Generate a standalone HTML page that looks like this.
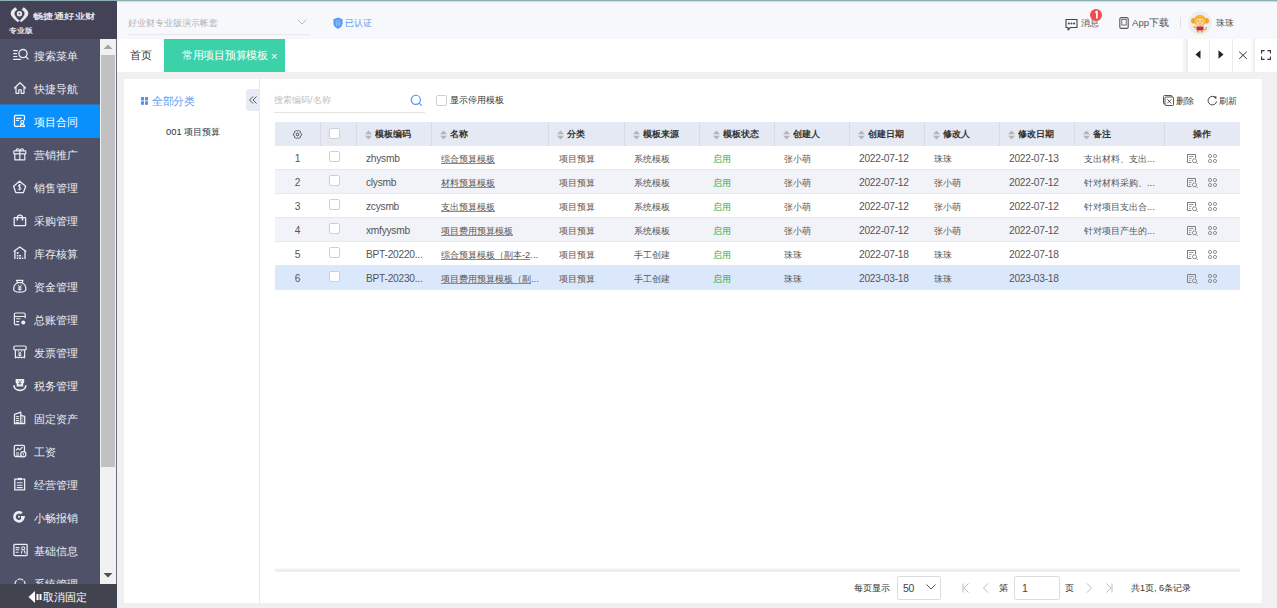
<!DOCTYPE html>
<html><head><meta charset="utf-8">
<style>
*{margin:0;padding:0;box-sizing:border-box}
html,body{width:1277px;height:608px;overflow:hidden;background:#f0f0f0;font-family:"Liberation Sans",sans-serif;color:#333}
.a{position:absolute}
#top{left:0;top:0;width:1277px;height:1px;background:#8cafb1}
#sb{left:0;top:1px;width:117px;height:607px;background:#4e5168}
#sbh{left:0;top:1px;width:117px;height:38px;background:#434257}
.mi{position:absolute;left:0;width:100px;height:33px;color:#eceef3;font-size:11px;line-height:33px;white-space:nowrap}
.mi .t{position:absolute;left:34px;top:1px}
.mi svg{position:absolute;left:13px;top:9px;width:14px;height:14px;overflow:visible}
.mi.on{background:#0990fc;color:#fff;box-shadow:0 -1px 0 rgba(9,144,252,0.55)}
#track{left:100px;top:39px;width:16px;height:545px;background:#f1f1f1}
#thumb{left:101px;top:55px;width:14px;height:412px;background:#c1c1c1}
#sbline{left:116px;top:39px;width:1px;height:569px;background:#6b6e82}
#sbb{left:0;top:584px;width:117px;height:24px;background:#41434f;color:#fff;font-size:11px;line-height:25px}
#hdr{left:117px;top:1px;width:1160px;height:38px;background:#f7f8fc}
#tabs{left:117px;top:39px;width:1160px;height:33px;background:#fff}
#panel{left:124px;top:79px;width:1138px;height:524px;background:#fff}
#lp{left:259px;top:79px;width:1px;height:524px;background:#e8e8e8}
.hd{position:absolute;white-space:nowrap}
.tb{position:absolute;top:39px;width:22px;height:33px;background:#fff}
#grid{position:absolute;left:275px;top:122px;width:965px}
#grid .r{position:absolute;left:0;width:965px;height:24px}
#grid .c{position:absolute;top:0;height:24px;line-height:24px;font-size:9.4px;color:#555;white-space:nowrap;overflow:hidden}
#grid .h .c{font-weight:bold;color:#333;font-size:9px}
#grid .h{background:#e4e9f4}
#grid .h .dv{position:absolute;top:0;width:1px;height:24px;background:#d8dbe3}
#grid .b{border-bottom:1px solid #e6e8ee}
#grid .s{background:#f2f3f8}
#grid .sel{background:#dbe8fb}
.cb{position:absolute;width:11px;height:11px;border:1px solid #cfcfcf;border-radius:2px;background:#fff}
.srt{position:absolute;top:7.5px;width:7px;height:10px}
.lk{text-decoration:underline;text-decoration-color:#8a8a8a;text-underline-offset:1px}
.gr{color:#1ab04f !important}

.ln{font-size:10.2px;letter-spacing:-0.25px;position:relative;top:0}

#grid .b .c{top:1px}
</style></head><body>
<div id="top" class="a"></div>
<div id="sb" class="a"></div>
<div id="sbh" class="a"></div>
<svg class="a" style="left:0;top:0" width="40" height="30">
<path d="M15.3 7.6Q10.4 10.8 10.9 14Q11.5 17.2 17.9 21.9L19 20.6Q14.4 16.6 14.1 13.8Q14 11.6 16.9 9.5Z" fill="#ececf0" stroke="#ececf0" stroke-width="0.6" stroke-linejoin="round"/>
<path d="M23.7 7.6Q28.6 10.8 28.1 14Q27.5 17.2 21.1 21.9L20 20.6Q24.6 16.6 24.9 13.8Q25 11.6 22.1 9.5Z" fill="#ececf0" stroke="#ececf0" stroke-width="0.6" stroke-linejoin="round"/>
<circle cx="19.5" cy="13.7" r="2.7" fill="#ececf0"/><circle cx="19.5" cy="13.7" r="0.9" fill="#6a6a7a"/>
</svg>
<div class="a" style="left:33px;top:12px;font-size:10px;line-height:10px;font-weight:bold;color:#e4e4ea;letter-spacing:0.4px;transform:scaleY(0.78);transform-origin:0 50%">畅捷通好业财</div>
<div class="a" style="left:9px;top:25.5px;font-size:8px;line-height:10px;font-weight:bold;color:#e6ebf5;transform:scaleY(0.9);transform-origin:0 50%">专业版</div>
<div class="mi" style="top:39px"><svg viewBox="0 0 14 14"><path d="M0.6 2.6h3.8M0.6 5.6h3M0.6 8.5h3.3M0.6 11.3h7" fill="none" stroke="currentColor" stroke-width="1.2" stroke-linecap="round"/><circle cx="10" cy="5.6" r="4.1" fill="none" stroke="currentColor" stroke-width="1.3"/><path d="M12.9 8.6l2.2 2.5" stroke="currentColor" stroke-width="1.3" stroke-linecap="round"/></svg><span class="t">搜索菜单</span></div>
<div class="mi" style="top:72px"><svg viewBox="0 0 14 14"><path d="M1.5 7L7 1.8 12.5 7M3 5.8V12.3h2.8V8.8h2.4v3.5H11V5.8" fill="none" stroke="currentColor" stroke-width="1.2" stroke-linejoin="round" stroke-linecap="round"/></svg><span class="t">快捷导航</span></div>
<div class="mi on" style="top:105px"><svg viewBox="0 0 14 14"><path d="M6.3 12.4H2.7A1.2 1.2 0 0 1 1.5 11.2V2.6A1.2 1.2 0 0 1 2.7 1.4h7.6A1.2 1.2 0 0 1 11.5 2.6V6.3" fill="none" stroke="currentColor" stroke-width="1.2"/><path d="M3.6 4.4h4.4M3.6 6.4h2" stroke="currentColor" stroke-width="1.1" stroke-linecap="round"/><circle cx="9.3" cy="8" r="1.5" fill="none" stroke="currentColor" stroke-width="1.1"/><path d="M7.1 12.5c0-1.6 1-2.4 2.2-2.4s2.2 0.8 2.2 2.4z" fill="none" stroke="currentColor" stroke-width="1.1" stroke-linejoin="round"/></svg><span class="t">项目合同</span></div>
<div class="mi" style="top:138px"><svg viewBox="0 0 14 14"><rect x="0.8" y="3.9" width="12" height="3" rx="0.6" fill="none" stroke="currentColor" stroke-width="1.2"/><path d="M1.8 6.9v5.9h10V6.9M6.8 3.9v8.9M6.8 3.7C5.6 1.2 3 1 3.3 3.7M6.8 3.7C8 1.2 10.6 1 10.3 3.7" fill="none" stroke="currentColor" stroke-width="1.2" stroke-linejoin="round"/></svg><span class="t">营销推广</span></div>
<div class="mi" style="top:171px"><svg viewBox="0 0 14 14"><path d="M6.6 1.2L12.7 6.2 10.4 12.6H2.8L0.6 6.2Z" fill="none" stroke="currentColor" stroke-width="1.3" stroke-linejoin="round"/><path d="M8.1 5.4C7.6 4.6 5.3 4.6 5.3 6 5.3 7.3 8 7 8 8.4 8 9.8 5.6 9.8 5.1 9M6.6 4v6.4" fill="none" stroke="currentColor" stroke-width="1"/></svg><span class="t">销售管理</span></div>
<div class="mi" style="top:204px"><svg viewBox="0 0 14 14"><rect x="1.2" y="4.7" width="11.4" height="8" rx="0.5" fill="none" stroke="currentColor" stroke-width="1.3"/><path d="M4.2 4.6C4.6 1.4 9.2 1.4 9.6 4.6" fill="none" stroke="currentColor" stroke-width="1.2"/><path d="M4.3 4.8v2.6M9.5 4.8v2.6" stroke="currentColor" stroke-width="1.6"/></svg><span class="t">采购管理</span></div>
<div class="mi" style="top:237px"><svg viewBox="0 0 14 14"><path d="M0.6 5.6L6.8 1 13.2 5.6M1.9 5v8M12 5v8" fill="none" stroke="currentColor" stroke-width="1.3" stroke-linejoin="round"/><path d="M3.8 6h1.6v2H3.8zM3.8 9h1.6v1.6H3.8zM6.1 9h2v1.6h-2zM3.8 11.4h1.6v1.6H3.8zM6.1 11.4h2v1.6h-2zM9 11.4h1.3v1.6H9z" fill="currentColor"/></svg><span class="t">库存核算</span></div>
<div class="mi" style="top:270px"><svg viewBox="0 0 14 14"><path d="M3.6 1.3h6.4L9.1 3.7H4.5z" fill="none" stroke="currentColor" stroke-width="1.2" stroke-linejoin="round"/><path d="M4.5 3.8C1.6 5.2 0.7 8 0.7 10 0.7 12.4 2.6 13.2 6.8 13.2S12.9 12.4 12.9 10C12.9 8 12 5.2 9.1 3.8" fill="none" stroke="currentColor" stroke-width="1.2"/><path d="M4.9 5.9L6.8 8.2 8.7 5.9M6.8 8.2v3.6M5 8.9h3.6M5 10.4h3.6" fill="none" stroke="currentColor" stroke-width="1"/></svg><span class="t">资金管理</span></div>
<div class="mi" style="top:303px"><svg viewBox="0 0 14 14"><path d="M6.3 12.6H2.7A1.3 1.3 0 0 1 1.4 11.3V2.3A1.3 1.3 0 0 1 2.7 1h8.2A1.3 1.3 0 0 1 12.2 2.3V6.3M1.4 4.5h10.8" fill="none" stroke="currentColor" stroke-width="1.2"/><path d="M3.6 6.8h3.4M3.6 9.6h2.2" stroke="currentColor" stroke-width="1.1" stroke-linecap="round"/><circle cx="10.3" cy="10.6" r="2" fill="currentColor"/></svg><span class="t">总账管理</span></div>
<div class="mi" style="top:336px"><svg viewBox="0 0 14 14"><rect x="0.8" y="1" width="12.4" height="3.9" rx="1.4" fill="none" stroke="currentColor" stroke-width="1.2"/><path d="M2.4 4.9v7.9l1.6-0.8 1.5 0.8 1.5-0.8 1.5 0.8 1.5-0.8 1.6 0.8V4.9" fill="none" stroke="currentColor" stroke-width="1.2" stroke-linejoin="round"/><path d="M5 6.2l1.8 2.1 1.8-2.1M6.8 8.3v3.1M5.2 8.9h3.2M5.2 10.3h3.2" fill="none" stroke="currentColor" stroke-width="0.9"/></svg><span class="t">发票管理</span></div>
<div class="mi" style="top:369px"><svg viewBox="0 0 14 14"><path d="M1 7.2c0 3 2.6 5.2 5.9 5.2s5.9-2.2 5.9-5.2" fill="none" stroke="currentColor" stroke-width="1.7"/><path d="M2.6 1h8.6v3.6l-1 1.2v2.6H3.6V5.8l-1-1.2z" fill="currentColor"/><path d="M5 2.5l1.8 1.6 1.8-1.6M6.8 4.1v3M5.3 5.5h3" stroke="#4e5168" stroke-width="0.7" fill="none"/></svg><span class="t">税务管理</span></div>
<div class="mi" style="top:402px"><svg viewBox="0 0 14 14"><path d="M1.5 12.5V3.3L7.8 1.2V12.5M7.8 4.4L11.7 5.4V12.5H0.8" fill="none" stroke="currentColor" stroke-width="1.3" stroke-linejoin="round"/><path d="M3 5.6h3.2M3 7.6h3.2M3 9.6h3.2M3 11.4h3.2M9.3 7h1M9.3 9h1M9.3 11h1" stroke="currentColor" stroke-width="1"/></svg><span class="t">固定资产</span></div>
<div class="mi" style="top:435px"><svg viewBox="0 0 14 14"><rect x="1.3" y="1.3" width="10.2" height="11.2" rx="1.5" fill="none" stroke="currentColor" stroke-width="1.3"/><path d="M3 6.3l2-2 1.8 1.5 2.7-2.8M3 9h3M3 11h3" fill="none" stroke="currentColor" stroke-width="1.1"/><circle cx="10.3" cy="10.3" r="2.6" fill="#4e5168" stroke="currentColor" stroke-width="1.2"/><path d="M10.3 9.2v2.2" stroke="currentColor" stroke-width="1"/></svg><span class="t">工资</span></div>
<div class="mi" style="top:468px"><svg viewBox="0 0 14 14"><path d="M4 2.2H1.8v10.6h9.8V2.2H9.4" fill="none" stroke="currentColor" stroke-width="1.3"/><path d="M4.3 0.9h4.8v2.2H4.3z" fill="currentColor"/><path d="M3.8 5.8h5.8M3.8 8.2h5.8M3.8 10.6h5.8" stroke="currentColor" stroke-width="1.1"/></svg><span class="t">经营管理</span></div>
<div class="mi" style="top:501px"><svg viewBox="0 0 14 14"><path d="M8.8 3.3A4.5 4.5 0 1 0 10.4 7.4H8" fill="none" stroke="currentColor" stroke-width="2.7"/><path d="M6 5.5L7.3 6.8 6 8.1 4.7 6.8z" fill="currentColor"/></svg><span class="t">小畅报销</span></div>
<div class="mi" style="top:534px"><svg viewBox="0 0 14 14"><rect x="0.9" y="1.4" width="13.2" height="11.2" rx="0.8" fill="none" stroke="currentColor" stroke-width="1.3"/><path d="M2.6 4.6h3.8M2.6 6.8h3.8M2.6 9.3h3" stroke="currentColor" stroke-width="1.1"/><circle cx="10.2" cy="5.3" r="1.5" fill="none" stroke="currentColor" stroke-width="1.1"/><path d="M8.2 10.5l1-3.2M12.2 10.5l-1-3.2" stroke="currentColor" stroke-width="1.1"/></svg><span class="t">基础信息</span></div>
<div class="mi" style="top:567px"><svg viewBox="0 0 14 14"><circle cx="7" cy="8" r="5" fill="none" stroke="currentColor" stroke-width="1.2" stroke-linejoin="round" stroke-linecap="round" stroke-dasharray="5 2"/></svg><span class="t">系统管理</span></div>
<div id="track" class="a"></div>
<div id="thumb" class="a"></div>
<svg class="a" style="left:103px;top:44px" width="10" height="6"><path d="M5 0.5L9.5 5H0.5z" fill="#a3a3a3"/></svg>
<svg class="a" style="left:103px;top:572px" width="10" height="6"><path d="M5 5.5L9.5 1H0.5z" fill="#505050"/></svg>
<div id="sbline" class="a"></div>
<div id="sbb" class="a"></div>
<svg class="a" style="left:28px;top:590px" width="15" height="14"><path d="M0.5 7L7 1v12z" fill="#fff"/><rect x="8.5" y="4" width="2" height="6" fill="#fff"/><rect x="11.5" y="4" width="2" height="6" fill="#fff"/></svg>
<div class="a" style="left:43px;top:589px;font-size:11px;line-height:17px;color:#fff">取消固定</div>
<div id="hdr" class="a"></div>
<div class="a" style="left:117px;top:1px;width:1160px;height:1px;background:#d5dfe2"></div>
<div class="a" style="left:117px;top:2px;width:1160px;height:1px;background:#eff2f6"></div>
<div id="tabs" class="a"></div>
<div id="panel" class="a"></div>
<div id="lp" class="a"></div>
<div class="hd" style="left:128px;top:17px;font-size:9px;line-height:13px;color:#b3b3b3">好业财专业版演示帐套</div>
<div class="a" style="left:128px;top:34px;width:182px;height:1px;background:#e6e8ee"></div>
<svg class="a" style="left:297px;top:19px" width="10" height="6"><path d="M0.5 0.5L5 5 9.5 0.5" fill="none" stroke="#b8b8b8" stroke-width="1"/></svg>
<svg class="a" style="left:333px;top:16.5px" width="10" height="12" viewBox="0 0 10 12"><path d="M5 0.6L9.6 2.3v4c0 2.9-2.2 4.7-4.6 5.4C2.6 11 0.4 9.2 0.4 6.3V2.3z" fill="#5a9cf6"/><path d="M2.6 5L5 3.2 7.4 5M3.6 5v3.8M6.4 5v3.8M5 5.2v3.6" stroke="#a9ccfa" stroke-width="0.7" fill="none"/></svg>
<div class="hd" style="left:345px;top:17px;font-size:9px;line-height:13px;color:#5096f4">已认证</div>
<svg class="a" style="left:1065px;top:18px" width="13" height="13" viewBox="0 0 13 13"><path d="M1 1.5h11v8H5.5L3 12V9.5H1z" fill="none" stroke="#444" stroke-width="1.1" stroke-linejoin="round"/><circle cx="3.9" cy="5.5" r="1" fill="#444"/><circle cx="6.5" cy="5.5" r="1" fill="#444"/><circle cx="9.1" cy="5.5" r="1" fill="#444"/></svg>
<div class="hd" style="left:1081px;top:17px;font-size:9px;line-height:13px;color:#555">消息</div>
<svg class="a" style="left:1089px;top:8px" width="14" height="14" viewBox="0 0 14 14"><circle cx="7" cy="7" r="6" fill="#f14c4c"/><path d="M6.2 4.6L7.9 3.4V10.6" fill="none" stroke="#fff" stroke-width="1.7" stroke-linejoin="round"/></svg>
<svg class="a" style="left:1119px;top:17px" width="10" height="12" viewBox="0 0 10 12"><rect x="0.8" y="0.6" width="8.4" height="10.8" rx="1.5" fill="none" stroke="#555" stroke-width="1.1"/><rect x="2.8" y="2.5" width="4.4" height="5.5" fill="none" stroke="#555" stroke-width="0.8"/></svg>
<div class="hd" style="left:1132px;top:16px;font-size:9.6px;line-height:13px;color:#555">App下载</div>
<div class="a" style="left:1180px;top:17px;width:1px;height:11px;background:#e0e0e0"></div>
<svg class="a" style="left:1188px;top:11px" width="24" height="24" viewBox="0 0 24 24"><circle cx="12" cy="12" r="11.8" fill="#ededf0"/>
<circle cx="5.8" cy="9.8" r="2.8" fill="#f0a030"/><circle cx="18.2" cy="9.8" r="2.8" fill="#f0a030"/>
<ellipse cx="12" cy="9.5" rx="6" ry="5.8" fill="#f5b23c"/><ellipse cx="12" cy="11" rx="4" ry="3.4" fill="#fcd58a"/>
<circle cx="10.3" cy="10" r="0.6" fill="#7a5a60"/><circle cx="13.7" cy="10" r="0.6" fill="#7a5a60"/><path d="M11 12.5q1 0.8 2 0" stroke="#c07030" stroke-width="0.5" fill="none"/>
<path d="M8.5 15.5h7v4h-7z" fill="#c8283a"/><circle cx="6.8" cy="16.3" r="1.2" fill="#f5b23c"/><path d="M9 19.5h2.2v2h-2.2zM12.8 19.5h2.2v2h-2.2z" fill="#f0a030"/><path d="M15.5 19c2 0 3-1 2.8-3" stroke="#f0a030" stroke-width="1.2" fill="none"/></svg>
<div class="hd" style="left:1216px;top:17px;font-size:9px;line-height:13px;color:#555">珠珠</div>
<div class="hd" style="left:130px;top:48px;font-size:11px;line-height:15px;color:#333">首页</div>
<div class="a" style="left:164px;top:39px;width:121px;height:33px;background:#3bd2aa"></div>
<div class="hd" style="left:182px;top:48px;font-size:11px;line-height:15px;color:#fff;letter-spacing:-0.3px">常用项目预算模板</div>
<div class="hd" style="left:271px;top:49px;font-size:11px;line-height:15px;color:#fff">×</div>
<div class="a" style="left:1181px;top:39px;width:6px;height:33px;background:linear-gradient(to right,rgba(0,0,0,0),rgba(0,0,0,0.07))"></div>
<div class="tb" style="left:1187px;width:22px;border-left:1px solid #ebebeb"></div>
<div class="tb" style="left:1209px;width:23px;border-left:1px solid #ebebeb"></div>
<div class="tb" style="left:1232px;width:22px;border-left:1px solid #ebebeb"></div>
<div class="tb" style="left:1254px;width:23px;border-left:1px solid #ebebeb"></div>
<div class="a" style="left:1250px;top:39px;width:4px;height:33px;background:linear-gradient(to right,rgba(0,0,0,0),rgba(0,0,0,0.05))"></div>
<svg class="a" style="left:1195px;top:50px" width="6" height="9"><path d="M5.5 0.3v8.4L0.5 4.5z" fill="#222"/></svg>
<svg class="a" style="left:1218px;top:50px" width="6" height="9"><path d="M0.5 0.3v8.4L5.5 4.5z" fill="#222"/></svg>
<svg class="a" style="left:1238px;top:50px" width="10" height="10"><path d="M1.2 1.7l7.6 7.2M8.8 1.7L1.2 8.9" stroke="#333" stroke-width="1"/></svg>
<svg class="a" style="left:1261px;top:50px" width="10" height="10"><path d="M0.6 3.6V0.6H3.6M6.4 0.6h3V3.6M9.4 6.4v3H6.4M3.6 9.4H0.6V6.4" fill="none" stroke="#333" stroke-width="1.1"/></svg>
<svg class="a" style="left:141px;top:97px" width="8" height="9"><rect x="0" y="0" width="3" height="3.5" fill="#4f92f3"/><rect x="4" y="0" width="3" height="3.5" fill="#4f92f3"/><rect x="0" y="4.3" width="3" height="3.5" fill="#4f92f3"/><rect x="4" y="4.3" width="3" height="3.5" fill="#4f92f3"/></svg>
<div class="hd" style="left:152px;top:94px;font-size:10.5px;line-height:15px;color:#5a9cf5;letter-spacing:-0.4px">全部分类</div>
<div class="hd" style="left:166px;top:125px;font-size:9.4px;line-height:13px;color:#333">001 项目预算</div>
<div class="a" style="left:246px;top:89px;width:13px;height:22px;background:#e6ebf5;border-radius:3px 0 0 3px"></div>
<svg class="a" style="left:248px;top:95px" width="10" height="10"><path d="M5 1.5L1.5 5 5 8.5M8.5 1.5L5 5 8.5 8.5" fill="none" stroke="#555" stroke-width="1"/></svg>
<div class="hd" style="left:274px;top:94px;font-size:9px;line-height:13px;color:#bfbfbf">搜索编码/名称</div>
<div class="a" style="left:274px;top:112px;width:151px;height:1px;background:#e3e3e3"></div>
<svg class="a" style="left:410px;top:94px" width="13" height="13"><circle cx="5.8" cy="5.8" r="4.6" fill="none" stroke="#4a8ff0" stroke-width="1.1"/><path d="M9.2 9.2l2.5 2.5" stroke="#4a8ff0" stroke-width="1.1"/></svg>
<div class="cb" style="left:436px;top:95px"></div>
<div class="hd" style="left:450px;top:94px;font-size:9px;line-height:13px;color:#333">显示停用模板</div>
<svg class="a" style="left:1163px;top:95px" width="11" height="11"><rect x="0.5" y="0.5" width="8.5" height="8.5" rx="1" fill="none" stroke="#444" stroke-width="0.9"/><rect x="2" y="2" width="8.5" height="8.5" rx="1" fill="#fff" stroke="#444" stroke-width="0.9"/><path d="M4.3 4.3l4 4M8.3 4.3l-4 4" stroke="#444" stroke-width="0.9"/></svg>
<div class="hd" style="left:1176px;top:95px;font-size:9px;line-height:13px;color:#444">删除</div>
<svg class="a" style="left:1207px;top:95px" width="11" height="11"><path d="M8.8 3A4.3 4.3 0 1 0 9.6 6.5" fill="none" stroke="#444" stroke-width="1"/><path d="M6.5 1.8L9.5 1.2 9.3 4.3z" fill="#444"/></svg>
<div class="hd" style="left:1219px;top:95px;font-size:9px;line-height:13px;color:#444">刷新</div>
<div id="grid">
<div class="r h" style="top:0"><svg class="a" style="left:17px;top:7px" width="11" height="11" viewBox="0 0 11 11"><path d="M5.50 2.20A1.7 1.7 0 0 1 8.36 3.85A1.7 1.7 0 0 1 8.36 7.15A1.7 1.7 0 0 1 5.50 8.80A1.7 1.7 0 0 1 2.64 7.15A1.7 1.7 0 0 1 2.64 3.85A1.7 1.7 0 0 1 5.50 2.20z" fill="none" stroke="#444" stroke-width="0.9"/><circle cx="5.5" cy="5.5" r="1.3" fill="none" stroke="#444" stroke-width="1"/></svg><div class="dv" style="left:45px"></div><div class="cb" style="left:54px;top:6px"></div><div class="dv" style="left:81px"></div><svg class="srt" style="left:90px" width="7" height="10" viewBox="0 0 7 10"><path d="M3.5 0.5L7 4.2H0z" fill="#b4b4b4"/><path d="M3.5 9.5L7 5.8H0z" fill="#b4b4b4"/></svg><div class="c" style="left:100px;width:56px">模板编码</div><div class="dv" style="left:156px"></div><svg class="srt" style="left:165px" width="7" height="10" viewBox="0 0 7 10"><path d="M3.5 0.5L7 4.2H0z" fill="#b4b4b4"/><path d="M3.5 9.5L7 5.8H0z" fill="#b4b4b4"/></svg><div class="c" style="left:175px;width:98px">名称</div><div class="dv" style="left:273px"></div><svg class="srt" style="left:282px" width="7" height="10" viewBox="0 0 7 10"><path d="M3.5 0.5L7 4.2H0z" fill="#b4b4b4"/><path d="M3.5 9.5L7 5.8H0z" fill="#b4b4b4"/></svg><div class="c" style="left:292px;width:57px">分类</div><div class="dv" style="left:349px"></div><svg class="srt" style="left:358px" width="7" height="10" viewBox="0 0 7 10"><path d="M3.5 0.5L7 4.2H0z" fill="#b4b4b4"/><path d="M3.5 9.5L7 5.8H0z" fill="#b4b4b4"/></svg><div class="c" style="left:368px;width:56px">模板来源</div><div class="dv" style="left:424px"></div><svg class="srt" style="left:438px" width="7" height="10" viewBox="0 0 7 10"><path d="M3.5 0.5L7 4.2H0z" fill="#b4b4b4"/><path d="M3.5 9.5L7 5.8H0z" fill="#b4b4b4"/></svg><div class="c" style="left:448px;width:51px">模板状态</div><div class="dv" style="left:499px"></div><svg class="srt" style="left:508px" width="7" height="10" viewBox="0 0 7 10"><path d="M3.5 0.5L7 4.2H0z" fill="#b4b4b4"/><path d="M3.5 9.5L7 5.8H0z" fill="#b4b4b4"/></svg><div class="c" style="left:518px;width:56px">创建人</div><div class="dv" style="left:574px"></div><svg class="srt" style="left:583px" width="7" height="10" viewBox="0 0 7 10"><path d="M3.5 0.5L7 4.2H0z" fill="#b4b4b4"/><path d="M3.5 9.5L7 5.8H0z" fill="#b4b4b4"/></svg><div class="c" style="left:593px;width:56px">创建日期</div><div class="dv" style="left:649px"></div><svg class="srt" style="left:658px" width="7" height="10" viewBox="0 0 7 10"><path d="M3.5 0.5L7 4.2H0z" fill="#b4b4b4"/><path d="M3.5 9.5L7 5.8H0z" fill="#b4b4b4"/></svg><div class="c" style="left:668px;width:56px">修改人</div><div class="dv" style="left:724px"></div><svg class="srt" style="left:733px" width="7" height="10" viewBox="0 0 7 10"><path d="M3.5 0.5L7 4.2H0z" fill="#b4b4b4"/><path d="M3.5 9.5L7 5.8H0z" fill="#b4b4b4"/></svg><div class="c" style="left:743px;width:56px">修改日期</div><div class="dv" style="left:799px"></div><svg class="srt" style="left:808px" width="7" height="10" viewBox="0 0 7 10"><path d="M3.5 0.5L7 4.2H0z" fill="#b4b4b4"/><path d="M3.5 9.5L7 5.8H0z" fill="#b4b4b4"/></svg><div class="c" style="left:818px;width:71px">备注</div><div class="dv" style="left:889px"></div><div class="c" style="left:889px;width:76px;text-align:center">操作</div></div>
<div class="r b" style="top:24px"><div class="c" style="left:0px;width:45px;text-align:center"><span class="ln">1</span></div><div class="cb" style="left:54px;top:5px"></div><div class="c" style="left:91px;width:65px"><span class="ln">zhysmb</span></div><div class="c" style="left:166px;width:107px"><span class="lk">综合预算模板</span></div><div class="c" style="left:284px;width:65px">项目预算</div><div class="c" style="left:359px;width:65px">系统模板</div><div class="c gr" style="left:438px;width:61px">启用</div><div class="c" style="left:509px;width:65px">张小萌</div><div class="c" style="left:584px;width:65px"><span class="ln">2022-07-12</span></div><div class="c" style="left:659px;width:65px">珠珠</div><div class="c" style="left:734px;width:65px"><span class="ln">2022-07-13</span></div><div class="c" style="left:809px;width:80px">支出材料、支出...</div><svg class="a" style="left:912px;top:8px" width="12" height="11" viewBox="0 0 12 11"><path d="M8.5 4V0.5H0.5v8h4" fill="none" stroke="#808080" stroke-width="1"/><path d="M2 2.5h4.5M2 4.5h2.5M2 6.5h1.5" stroke="#9a9a9a" stroke-width="1"/><circle cx="7.5" cy="6.8" r="2" fill="none" stroke="#808080" stroke-width="0.9"/><path d="M9 8.3l1.6 1.6" stroke="#808080" stroke-width="1"/></svg><svg class="a" style="left:933px;top:8px" width="11" height="11" viewBox="0 0 11 11"><rect x="0.5" y="0.5" width="3" height="3" rx="1.3" fill="none" stroke="#777" stroke-width="0.9"/><rect x="5.5" y="0.5" width="3" height="3" rx="1.3" fill="none" stroke="#777" stroke-width="0.9"/><rect x="0.5" y="5.5" width="3" height="3" rx="1.3" fill="none" stroke="#777" stroke-width="0.9"/><rect x="5.5" y="5.5" width="3" height="3" rx="1.3" fill="none" stroke="#777" stroke-width="0.9"/></svg></div>
<div class="r b s" style="top:48px"><div class="c" style="left:0px;width:45px;text-align:center"><span class="ln">2</span></div><div class="cb" style="left:54px;top:5px"></div><div class="c" style="left:91px;width:65px"><span class="ln">clysmb</span></div><div class="c" style="left:166px;width:107px"><span class="lk">材料预算模板</span></div><div class="c" style="left:284px;width:65px">项目预算</div><div class="c" style="left:359px;width:65px">系统模板</div><div class="c gr" style="left:438px;width:61px">启用</div><div class="c" style="left:509px;width:65px">张小萌</div><div class="c" style="left:584px;width:65px"><span class="ln">2022-07-12</span></div><div class="c" style="left:659px;width:65px">张小萌</div><div class="c" style="left:734px;width:65px"><span class="ln">2022-07-12</span></div><div class="c" style="left:809px;width:80px">针对材料采购、...</div><svg class="a" style="left:912px;top:8px" width="12" height="11" viewBox="0 0 12 11"><path d="M8.5 4V0.5H0.5v8h4" fill="none" stroke="#808080" stroke-width="1"/><path d="M2 2.5h4.5M2 4.5h2.5M2 6.5h1.5" stroke="#9a9a9a" stroke-width="1"/><circle cx="7.5" cy="6.8" r="2" fill="none" stroke="#808080" stroke-width="0.9"/><path d="M9 8.3l1.6 1.6" stroke="#808080" stroke-width="1"/></svg><svg class="a" style="left:933px;top:8px" width="11" height="11" viewBox="0 0 11 11"><rect x="0.5" y="0.5" width="3" height="3" rx="1.3" fill="none" stroke="#777" stroke-width="0.9"/><rect x="5.5" y="0.5" width="3" height="3" rx="1.3" fill="none" stroke="#777" stroke-width="0.9"/><rect x="0.5" y="5.5" width="3" height="3" rx="1.3" fill="none" stroke="#777" stroke-width="0.9"/><rect x="5.5" y="5.5" width="3" height="3" rx="1.3" fill="none" stroke="#777" stroke-width="0.9"/></svg></div>
<div class="r b" style="top:72px"><div class="c" style="left:0px;width:45px;text-align:center"><span class="ln">3</span></div><div class="cb" style="left:54px;top:5px"></div><div class="c" style="left:91px;width:65px"><span class="ln">zcysmb</span></div><div class="c" style="left:166px;width:107px"><span class="lk">支出预算模板</span></div><div class="c" style="left:284px;width:65px">项目预算</div><div class="c" style="left:359px;width:65px">系统模板</div><div class="c gr" style="left:438px;width:61px">启用</div><div class="c" style="left:509px;width:65px">张小萌</div><div class="c" style="left:584px;width:65px"><span class="ln">2022-07-12</span></div><div class="c" style="left:659px;width:65px">张小萌</div><div class="c" style="left:734px;width:65px"><span class="ln">2022-07-12</span></div><div class="c" style="left:809px;width:80px">针对项目支出合...</div><svg class="a" style="left:912px;top:8px" width="12" height="11" viewBox="0 0 12 11"><path d="M8.5 4V0.5H0.5v8h4" fill="none" stroke="#808080" stroke-width="1"/><path d="M2 2.5h4.5M2 4.5h2.5M2 6.5h1.5" stroke="#9a9a9a" stroke-width="1"/><circle cx="7.5" cy="6.8" r="2" fill="none" stroke="#808080" stroke-width="0.9"/><path d="M9 8.3l1.6 1.6" stroke="#808080" stroke-width="1"/></svg><svg class="a" style="left:933px;top:8px" width="11" height="11" viewBox="0 0 11 11"><rect x="0.5" y="0.5" width="3" height="3" rx="1.3" fill="none" stroke="#777" stroke-width="0.9"/><rect x="5.5" y="0.5" width="3" height="3" rx="1.3" fill="none" stroke="#777" stroke-width="0.9"/><rect x="0.5" y="5.5" width="3" height="3" rx="1.3" fill="none" stroke="#777" stroke-width="0.9"/><rect x="5.5" y="5.5" width="3" height="3" rx="1.3" fill="none" stroke="#777" stroke-width="0.9"/></svg></div>
<div class="r b s" style="top:96px"><div class="c" style="left:0px;width:45px;text-align:center"><span class="ln">4</span></div><div class="cb" style="left:54px;top:5px"></div><div class="c" style="left:91px;width:65px"><span class="ln">xmfyysmb</span></div><div class="c" style="left:166px;width:107px"><span class="lk">项目费用预算模板</span></div><div class="c" style="left:284px;width:65px">项目预算</div><div class="c" style="left:359px;width:65px">系统模板</div><div class="c gr" style="left:438px;width:61px">启用</div><div class="c" style="left:509px;width:65px">张小萌</div><div class="c" style="left:584px;width:65px"><span class="ln">2022-07-12</span></div><div class="c" style="left:659px;width:65px">张小萌</div><div class="c" style="left:734px;width:65px"><span class="ln">2022-07-12</span></div><div class="c" style="left:809px;width:80px">针对项目产生的...</div><svg class="a" style="left:912px;top:8px" width="12" height="11" viewBox="0 0 12 11"><path d="M8.5 4V0.5H0.5v8h4" fill="none" stroke="#808080" stroke-width="1"/><path d="M2 2.5h4.5M2 4.5h2.5M2 6.5h1.5" stroke="#9a9a9a" stroke-width="1"/><circle cx="7.5" cy="6.8" r="2" fill="none" stroke="#808080" stroke-width="0.9"/><path d="M9 8.3l1.6 1.6" stroke="#808080" stroke-width="1"/></svg><svg class="a" style="left:933px;top:8px" width="11" height="11" viewBox="0 0 11 11"><rect x="0.5" y="0.5" width="3" height="3" rx="1.3" fill="none" stroke="#777" stroke-width="0.9"/><rect x="5.5" y="0.5" width="3" height="3" rx="1.3" fill="none" stroke="#777" stroke-width="0.9"/><rect x="0.5" y="5.5" width="3" height="3" rx="1.3" fill="none" stroke="#777" stroke-width="0.9"/><rect x="5.5" y="5.5" width="3" height="3" rx="1.3" fill="none" stroke="#777" stroke-width="0.9"/></svg></div>
<div class="r b" style="top:120px"><div class="c" style="left:0px;width:45px;text-align:center"><span class="ln">5</span></div><div class="cb" style="left:54px;top:5px"></div><div class="c" style="left:91px;width:65px"><span class="ln">BPT-20220...</span></div><div class="c" style="left:166px;width:107px"><span class="lk">综合预算模板（副本-2</span>...</div><div class="c" style="left:284px;width:65px">项目预算</div><div class="c" style="left:359px;width:65px">手工创建</div><div class="c gr" style="left:438px;width:61px">启用</div><div class="c" style="left:509px;width:65px">珠珠</div><div class="c" style="left:584px;width:65px"><span class="ln">2022-07-18</span></div><div class="c" style="left:659px;width:65px">珠珠</div><div class="c" style="left:734px;width:65px"><span class="ln">2022-07-18</span></div><div class="c" style="left:809px;width:80px"></div><svg class="a" style="left:912px;top:8px" width="12" height="11" viewBox="0 0 12 11"><path d="M8.5 4V0.5H0.5v8h4" fill="none" stroke="#808080" stroke-width="1"/><path d="M2 2.5h4.5M2 4.5h2.5M2 6.5h1.5" stroke="#9a9a9a" stroke-width="1"/><circle cx="7.5" cy="6.8" r="2" fill="none" stroke="#808080" stroke-width="0.9"/><path d="M9 8.3l1.6 1.6" stroke="#808080" stroke-width="1"/></svg><svg class="a" style="left:933px;top:8px" width="11" height="11" viewBox="0 0 11 11"><rect x="0.5" y="0.5" width="3" height="3" rx="1.3" fill="none" stroke="#777" stroke-width="0.9"/><rect x="5.5" y="0.5" width="3" height="3" rx="1.3" fill="none" stroke="#777" stroke-width="0.9"/><rect x="0.5" y="5.5" width="3" height="3" rx="1.3" fill="none" stroke="#777" stroke-width="0.9"/><rect x="5.5" y="5.5" width="3" height="3" rx="1.3" fill="none" stroke="#777" stroke-width="0.9"/></svg></div>
<div class="r b s sel" style="top:144px"><div class="c" style="left:0px;width:45px;text-align:center"><span class="ln">6</span></div><div class="cb" style="left:54px;top:5px"></div><div class="c" style="left:91px;width:65px"><span class="ln">BPT-20230...</span></div><div class="c" style="left:166px;width:107px"><span class="lk">项目费用预算模板（副</span>...</div><div class="c" style="left:284px;width:65px">项目预算</div><div class="c" style="left:359px;width:65px">手工创建</div><div class="c gr" style="left:438px;width:61px">启用</div><div class="c" style="left:509px;width:65px">珠珠</div><div class="c" style="left:584px;width:65px"><span class="ln">2023-03-18</span></div><div class="c" style="left:659px;width:65px">珠珠</div><div class="c" style="left:734px;width:65px"><span class="ln">2023-03-18</span></div><div class="c" style="left:809px;width:80px"></div><svg class="a" style="left:912px;top:8px" width="12" height="11" viewBox="0 0 12 11"><path d="M8.5 4V0.5H0.5v8h4" fill="none" stroke="#808080" stroke-width="1"/><path d="M2 2.5h4.5M2 4.5h2.5M2 6.5h1.5" stroke="#9a9a9a" stroke-width="1"/><circle cx="7.5" cy="6.8" r="2" fill="none" stroke="#808080" stroke-width="0.9"/><path d="M9 8.3l1.6 1.6" stroke="#808080" stroke-width="1"/></svg><svg class="a" style="left:933px;top:8px" width="11" height="11" viewBox="0 0 11 11"><rect x="0.5" y="0.5" width="3" height="3" rx="1.3" fill="none" stroke="#777" stroke-width="0.9"/><rect x="5.5" y="0.5" width="3" height="3" rx="1.3" fill="none" stroke="#777" stroke-width="0.9"/><rect x="0.5" y="5.5" width="3" height="3" rx="1.3" fill="none" stroke="#777" stroke-width="0.9"/><rect x="5.5" y="5.5" width="3" height="3" rx="1.3" fill="none" stroke="#777" stroke-width="0.9"/></svg></div>
</div>
<div class="a" style="left:275px;top:568px;width:965px;height:4px;background:linear-gradient(to bottom,#fbfbfb 0%,#f1f1f1 40%,#e8e8e8 70%,#f6f6f6 100%)"></div>
<div class="hd" style="left:854px;top:582px;font-size:9px;line-height:13px;color:#333">每页显示</div>
<div class="a" style="left:897px;top:576px;width:44px;height:24px;border:1px solid #dcdcdc;border-radius:2px"></div>
<div class="hd" style="left:903px;top:582px;font-size:10.5px;line-height:13px;color:#444;letter-spacing:-0.3px">50</div>
<svg class="a" style="left:926px;top:584px" width="10" height="6"><path d="M0.5 0.5L5 5 9.5 0.5" fill="none" stroke="#555" stroke-width="1"/></svg>
<svg class="a" style="left:962px;top:583px" width="8" height="10"><path d="M1 0.5v9M6.5 0.5L2.2 5 6.5 9.5" fill="none" stroke="#bbb" stroke-width="1"/></svg>
<svg class="a" style="left:982px;top:583px" width="7" height="10"><path d="M6 0.5L1.5 5 6 9.5" fill="none" stroke="#bbb" stroke-width="1"/></svg>
<div class="hd" style="left:999px;top:582px;font-size:9px;line-height:13px;color:#333">第</div>
<div class="a" style="left:1014px;top:576px;width:46px;height:24px;border:1px solid #dcdcdc;border-radius:2px"></div>
<div class="hd" style="left:1022px;top:582px;font-size:10.5px;line-height:13px;color:#444">1</div>
<div class="hd" style="left:1065px;top:582px;font-size:9px;line-height:13px;color:#333">页</div>
<svg class="a" style="left:1086px;top:583px" width="7" height="10"><path d="M1 0.5L5.5 5 1 9.5" fill="none" stroke="#bbb" stroke-width="1"/></svg>
<svg class="a" style="left:1105px;top:583px" width="8" height="10"><path d="M7 0.5v9M1.5 0.5L5.8 5 1.5 9.5" fill="none" stroke="#bbb" stroke-width="1"/></svg>
<div class="hd" style="left:1131px;top:582px;font-size:9px;line-height:13px;color:#333">共1页, 6条记录</div>
</body></html>
